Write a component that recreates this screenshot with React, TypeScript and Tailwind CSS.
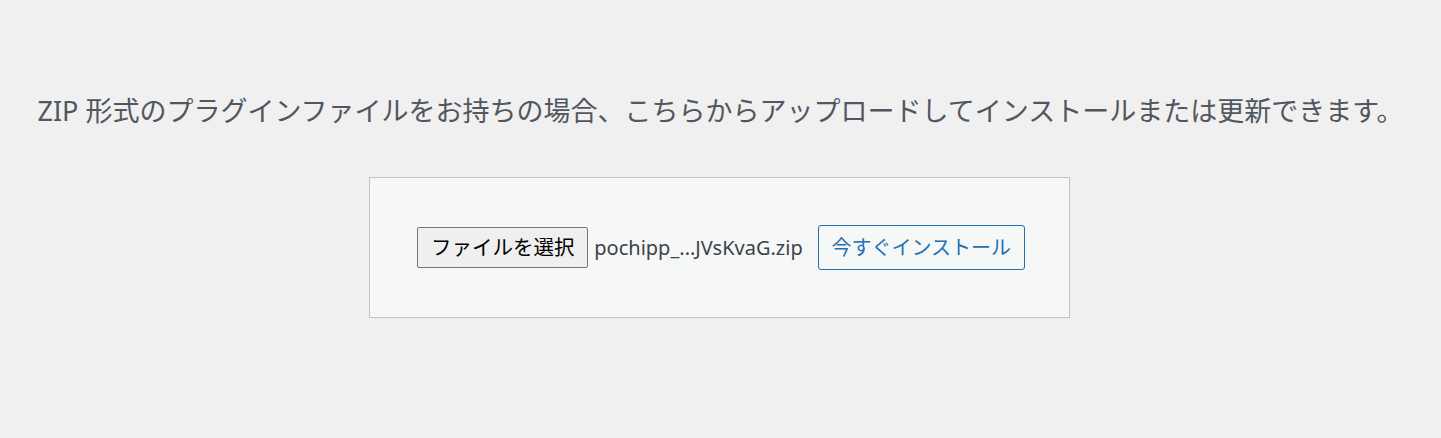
export default function App() {
  return (
    <div
      className="min-h-[438px] w-full bg-[#f0f0f1] pt-[93px]"
      style={{ fontFamily: '"Noto Sans", "Noto Sans CJK JP", sans-serif' }}
    >
      <p className="text-center text-[27px] leading-[36px] text-[#50575e]">
        ZIP 形式のプラグインファイルをお持ちの場合、こちらからアップロードしてインストールまたは更新できます。
      </p>

      <form className="mx-auto mt-[48px] flex h-[141px] w-[701px] -translate-x-px items-center justify-center border border-[#c3c4c7] bg-[#f6f7f7] pl-[3px]">
        <div className="flex items-center">
          <button
            type="button"
            className="h-[41px] w-[171px] rounded-[2px] border border-[#767676] bg-[#efefef] text-[20.5px] leading-none text-black"
          >
            ファイルを選択
          </button>
          <span className="ml-[6px] text-[20px] text-[#3c434a]">
            pochipp_...JVsKvaG.zip
          </span>
        </div>
        <button
          type="button"
          className="ml-[15px] h-[45px] w-[207px] rounded-[3px] border border-[#2271b1] bg-[#f6f7f7] text-[20px] leading-none text-[#2271b1]"
        >
          今すぐインストール
        </button>
      </form>
    </div>
  )
}
